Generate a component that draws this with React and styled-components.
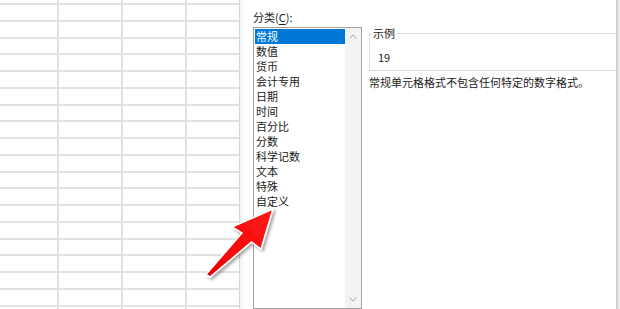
import React from 'react';
import styled, { createGlobalStyle } from 'styled-components';

const GlobalStyle = createGlobalStyle`
  html, body {
    margin: 0;
    padding: 0;
    width: 620px;
    height: 309px;
    overflow: hidden;
    background: #ffffff;
    font-family: "Noto Sans CJK SC", "Noto Sans", sans-serif;
  }
`;

const Screen = styled.div`
  position: relative;
  display: flex;
  width: 620px;
  height: 309px;
  overflow: hidden;
`;

// spreadsheet behind the dialog
const Sheet = styled.div`
  width: 239px;
  flex: none;
  overflow: hidden;
`;

const SheetGrid = styled.div`
  display: grid;
  grid-template-columns: repeat(4, 64px);
  grid-auto-rows: 16.75px;
  margin: -11.75px 0 0 -5px;
`;

const Cell = styled.div`
  box-sizing: border-box;
  border-right: 2px solid #e0e0e0;
  border-bottom: 2px solid #e2e2e2;
  background: #fff;
`;

const Dialog = styled.div`
  flex: 1;
  display: flex;
  gap: 7px;
  padding: 10px 0 0 13px;
  background: #fff;
  border-left: 1px solid #d6d6d6;
  box-shadow: inset 5px 0 5px -4px rgba(0, 0, 0, 0.07);
  font-size: 11px;
  color: #1a1a1a;
`;

const Edge = styled.div`
  width: 2px;
  flex: none;
  border-left: 2px solid #d2d2d2;
  background: #ededed;
`;

const LeftCol = styled.div`
  width: 109px;
  flex: none;
  display: flex;
  flex-direction: column;
`;

const Label = styled.div`
  line-height: 15px;
  margin-bottom: 2px;
  u {
    text-decoration-thickness: 1px;
    text-underline-offset: 2px;
  }
`;

const ListBox = styled.div`
  box-sizing: border-box;
  height: 288px;
  display: flex;
  border: 1px solid #a2a2a2;
  background: #fff;
`;

const Items = styled.div`
  flex: 1;
  padding: 1px 0 0 1px;
`;

const Item = styled.div`
  height: 15px;
  line-height: 15px;
  padding-left: 1px;
  white-space: nowrap;
  background: ${(p) => (p.$selected ? '#0078d7' : 'transparent')};
  color: ${(p) => (p.$selected ? '#fff' : '#1a1a1a')};
`;

const ScrollBar = styled.div`
  width: 16px;
  flex: none;
  display: flex;
  flex-direction: column;
  justify-content: space-between;
  background: #f3f3f3;
`;

const ScrollArrow = styled.div`
  height: 17px;
  display: flex;
  align-items: center;
  justify-content: center;
`;

const RightCol = styled.div`
  flex: 1;
  min-width: 0;
  display: flex;
  flex-direction: column;
`;

const Group = styled.fieldset`
  margin: 15.5px 0 0 0;
  padding: 9px 8px 5.5px 8px;
  border: 1px solid #dcdcdc;
  border-right: none;
  min-width: 0;
`;

const Legend = styled.legend`
  padding: 0 1px;
  margin-left: -6px;
  line-height: 15px;
  font-size: 11px;
`;

const Sample = styled.div`
  line-height: 15px;
  font-size: 11px;
`;

const Description = styled.div`
  margin-top: 3.5px;
  line-height: 15px;
  white-space: nowrap;
`;

// red annotation arrow lying over the picture
const Pointer = styled.svg`
  position: absolute;
  left: 195px;
  top: 200px;
  width: 90px;
  height: 90px;
  overflow: visible;
  pointer-events: none;
`;

const categories = ['常规', '数值', '货币', '会计专用', '日期', '时间', '百分比', '分数', '科学记数', '文本', '特殊', '自定义'];

const Chevron = ({ up }) => (
  <svg width="8" height="5" viewBox="0 0 8 5">
    <polyline
      points={up ? '0.5,4.5 4,1 7.5,4.5' : '0.5,0.5 4,4 7.5,0.5'}
      fill="none"
      stroke="#a6a6a6"
      strokeWidth="1"
    />
  </svg>
);

const App = () => {
  const cells = Array.from({ length: 4 * 20 });

  return (
    <Screen>
      <GlobalStyle />
      <Sheet>
        <SheetGrid>
          {cells.map((_, i) => (
            <Cell key={i} />
          ))}
        </SheetGrid>
      </Sheet>
      <Dialog>
        <LeftCol>
          <Label>
            分类(<u>C</u>):
          </Label>
          <ListBox>
            <Items>
              {categories.map((c, i) => (
                <Item key={c} $selected={i === 0}>
                  {c}
                </Item>
              ))}
            </Items>
            <ScrollBar>
              <ScrollArrow>
                <Chevron up />
              </ScrollArrow>
              <ScrollArrow>
                <Chevron />
              </ScrollArrow>
            </ScrollBar>
          </ListBox>
        </LeftCol>
        <RightCol>
          <Group>
            <Legend>示例</Legend>
            <Sample>19</Sample>
          </Group>
          <Description>常规单元格格式不包含任何特定的数字格式。</Description>
        </RightCol>
      </Dialog>
      <Edge />
      <Pointer viewBox="195 200 90 90">
        <defs>
          <linearGradient id="arrowFill" x1="0" y1="1" x2="1" y2="0">
            <stop offset="0" stopColor="#f00000" />
            <stop offset="1" stopColor="#ff1a1a" />
          </linearGradient>
          <filter id="arrowShadow" x="-30%" y="-30%" width="160%" height="160%">
            <feDropShadow dx="2" dy="2" stdDeviation="1.5" floodColor="#000" floodOpacity="0.35" />
          </filter>
        </defs>
        <polygon
          points="273,209 261,249 251.5,242 210,277 206,274.5 242,233 232,227"
          fill="url(#arrowFill)"
          stroke="#fff"
          strokeWidth="1.5"
          strokeLinejoin="miter"
          filter="url(#arrowShadow)"
        />
      </Pointer>
    </Screen>
  );
};

export default App;
